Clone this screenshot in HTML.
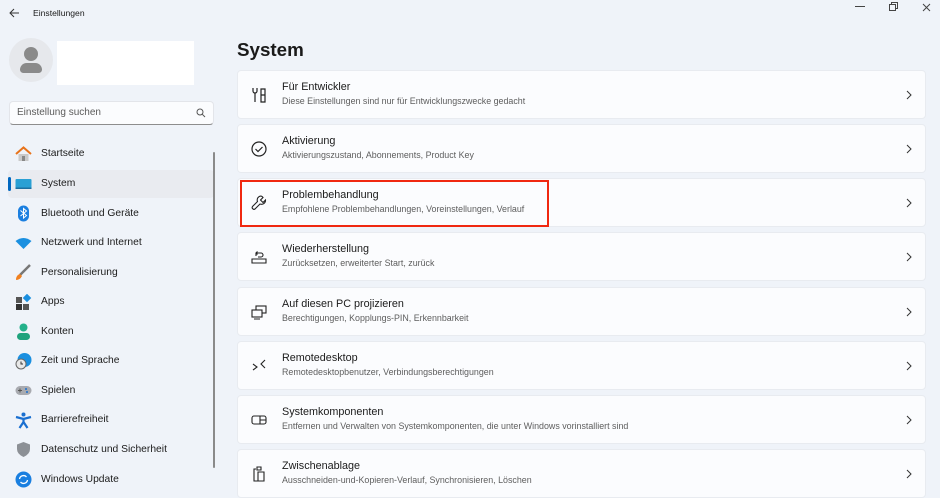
<!DOCTYPE html>
<html><head><meta charset="utf-8"><style>
*{margin:0;padding:0;box-sizing:border-box}
body{width:940px;height:492px;overflow:hidden;background:#eff3f9;font-family:"Liberation Sans",sans-serif;color:#1a1a1a;position:relative}
.abs{position:absolute}
.card{position:absolute;left:237px;width:689px;height:49px;background:#fbfcfe;border-radius:4px;border:1px solid #e8ebf0}
.card .t{position:absolute;left:44px;top:10px;font-size:10.8px;color:#1b1b1b}
.card .s{position:absolute;left:44px;top:25px;font-size:8.9px;color:#5e5e5e}
.card .ic{position:absolute;left:12px;top:15px;width:18px;height:18px}
.card .ch{position:absolute;left:667px;top:19px}
.nav{position:absolute;left:41px;font-size:10.3px;color:#1b1b1b}
.ni{position:absolute;left:15px;width:17px;height:17px}
</style></head><body>
<svg class="abs" style="left:8px;top:7px" width="12" height="12" viewBox="0 0 12 12"><path d="M11 6H2M6 2L2 6l4 4" stroke="#333" stroke-width="1" fill="none"/></svg>
<div class="abs" style="left:33px;top:8px;font-size:8.6px">Einstellungen</div>
<div class="abs" style="left:855px;top:6px;width:10px;border-top:1px solid #444"></div>
<svg class="abs" style="left:889px;top:2px" width="9" height="9"><rect x="0.5" y="2.5" width="6" height="6" stroke="#444" fill="none"/><path d="M2.5 2.5V0.5h6v6h-2" stroke="#444" fill="none"/></svg>
<svg class="abs" style="left:922px;top:3px" width="9" height="9"><path d="M1 1l7 7M8 1L1 8" stroke="#444"/></svg>

<div class="abs" style="left:9px;top:38px;width:44px;height:44px;border-radius:50%;background:#e6e8ec"></div>
<div class="abs" style="left:24px;top:47px;width:14px;height:14px;border-radius:50%;background:#8a8a8a"></div>
<div class="abs" style="left:20px;top:63px;width:22px;height:10px;border-radius:8px 8px 4px 4px;background:#8a8a8a"></div>
<div class="abs" style="left:57px;top:41px;width:137px;height:44px;background:#fff"></div>

<div class="abs" style="left:9px;top:101px;width:205px;height:24px;background:#fbfcfe;border:1px solid #e3e5ea;border-bottom:1px solid #8d8d8d;border-radius:4px"></div>
<div class="abs" style="left:17px;top:107px;font-size:10px;color:#5b5b5b">Einstellung suchen</div>
<svg class="abs" style="left:196px;top:108px" width="10" height="10"><circle cx="4" cy="4" r="3" stroke="#555" fill="none"/><path d="M6.2 6.2L9 9" stroke="#555"/></svg>

<div class="abs" style="left:8px;top:170px;width:206px;height:28px;background:#e9ebf0;border-radius:4px"></div>
<div class="abs" style="left:8px;top:177px;width:3px;height:14px;background:#0067c0;border-radius:2px"></div>
<div class="abs" style="left:213px;top:152px;width:2px;height:316px;background:#8a8a8a;border-radius:1px"></div>

<svg class="ni" style="top:146px" viewBox="0 0 17 17"><path d="M1 8L8.5 1.5 16 8" stroke="#e8731b" stroke-width="2" fill="none"/><rect x="3.5" y="8" width="10" height="7" fill="#c9c9c9"/><rect x="7" y="10" width="3" height="5" fill="#888"/></svg>
<div class="nav" style="top:148px">Startseite</div>
<svg class="ni" style="top:176px" viewBox="0 0 17 17"><rect x="0.5" y="3" width="16" height="10" rx="1" fill="#2aa0d4"/><rect x="0.5" y="11.5" width="16" height="1.5" fill="#1c6fa0"/></svg>
<div class="nav" style="top:178px">System</div>
<svg class="ni" style="top:205px" viewBox="0 0 17 17"><rect x="3" y="0.5" width="11" height="16" rx="5.5" fill="#1b7fe0"/><path d="M5.5 5.5l6 5-3 2.5V3.5l3 2.5-6 5" stroke="#fff" stroke-width="1" fill="none"/></svg>
<div class="nav" style="top:208px">Bluetooth und Geräte</div>
<svg class="ni" style="top:235px" viewBox="0 0 17 17"><path d="M0.5 6Q8.5 0 16.5 6L8.5 14Z" fill="#1a8fe0"/></svg>
<div class="nav" style="top:237px">Netzwerk und Internet</div>
<svg class="ni" style="top:264px" viewBox="0 0 17 17"><path d="M15 1L5 11" stroke="#777" stroke-width="2.5"/><path d="M5 10Q1 11 1 16 5 16 7 12Z" fill="#f08020"/></svg>
<div class="nav" style="top:267px">Personalisierung</div>
<svg class="ni" style="top:294px" viewBox="0 0 17 17"><rect x="1" y="3" width="6" height="6" fill="#555"/><rect x="1" y="10" width="6" height="6" fill="#333"/><rect x="8" y="10" width="6" height="6" fill="#555"/><rect x="9" y="1" width="6" height="6" fill="#1a8fe0" transform="rotate(45 12 4)"/></svg>
<div class="nav" style="top:296px">Apps</div>
<svg class="ni" style="top:323px" viewBox="0 0 17 17"><circle cx="8.5" cy="4.5" r="4" fill="#23b08a"/><rect x="2" y="10" width="13" height="7" rx="3.5" fill="#1fa37d"/></svg>
<div class="nav" style="top:326px">Konten</div>
<svg class="ni" style="top:353px" viewBox="0 0 17 17"><circle cx="9.5" cy="7" r="7" fill="#1a8fe0"/><circle cx="6" cy="11" r="5" fill="#e8e8e8" stroke="#666"/><path d="M6 8.5V11h2" stroke="#333" fill="none"/></svg>
<div class="nav" style="top:355px">Zeit und Sprache</div>
<svg class="ni" style="top:382px" viewBox="0 0 17 17"><rect x="0.5" y="4" width="16" height="9" rx="4.5" fill="#a8aab0"/><circle cx="11" cy="7" r="1" fill="#1a6fd0"/><circle cx="12" cy="10" r="1" fill="#1a6fd0"/><path d="M3 8.5h4M5 6.5v4" stroke="#555"/></svg>
<div class="nav" style="top:385px">Spielen</div>
<svg class="ni" style="top:412px" viewBox="0 0 17 17"><circle cx="8.5" cy="2.5" r="2" fill="#1a6fd0"/><path d="M1 5l7.5 2 7.5-2M8.5 7v3l-4 6M8.5 10l4 6" stroke="#1a6fd0" stroke-width="2.2" fill="none"/></svg>
<div class="nav" style="top:414px">Barrierefreiheit</div>
<svg class="ni" style="top:441px" viewBox="0 0 17 17"><path d="M8.5 1L15 3.5V8Q15 13 8.5 16 2 13 2 8V3.5Z" fill="#8c9096"/></svg>
<div class="nav" style="top:444px">Datenschutz und Sicherheit</div>
<svg class="ni" style="top:471px" viewBox="0 0 17 17"><circle cx="8.5" cy="8.5" r="8" fill="#1a7fe0"/><path d="M4.5 8a4 4 0 0 1 7-2M12.5 9a4 4 0 0 1-7 2" stroke="#fff" stroke-width="1.3" fill="none"/></svg>
<div class="nav" style="top:474px">Windows Update</div>

<div class="abs" style="left:237px;top:39px;font-size:18.8px;font-weight:bold;color:#1a1a1a">System</div>

<div class="card" style="top:70px"><svg class="ic" viewBox="0 0 18 18"><path d="M3 2v3a2 2 0 0 0 4 0V2M5 7v9M11 3h4v13h-4zM11 9h4" stroke="#222" stroke-width="1.2" fill="none"/></svg><div class="t">Für Entwickler</div><div class="s">Diese Einstellungen sind nur für Entwicklungszwecke gedacht</div><svg class="ch" width="8" height="10"><path d="M2 1l4 4-4 4" stroke="#333" fill="none"/></svg></div>
<div class="card" style="top:124px"><svg class="ic" viewBox="0 0 18 18"><circle cx="9" cy="9" r="7" stroke="#222" stroke-width="1.2" fill="none"/><path d="M5.5 9l2.5 2.5 4.5-4.5" stroke="#222" stroke-width="1.2" fill="none"/></svg><div class="t">Aktivierung</div><div class="s">Aktivierungszustand, Abonnements, Product Key</div><svg class="ch" width="8" height="10"><path d="M2 1l4 4-4 4" stroke="#333" fill="none"/></svg></div>
<div class="card" style="top:178px"><svg class="ic" viewBox="0 0 18 18"><path d="M11 2a4 4 0 0 0-3.5 5.5L2.5 12.5a1.8 1.8 0 0 0 2.5 2.5l5-5A4 4 0 0 0 15.5 6l-2.5 2.5-2.5-2.5L13 3.5A4 4 0 0 0 11 2z" stroke="#222" stroke-width="1.1" fill="none"/></svg><div class="t">Problembehandlung</div><div class="s">Empfohlene Problembehandlungen, Voreinstellungen, Verlauf</div><svg class="ch" width="8" height="10"><path d="M2 1l4 4-4 4" stroke="#333" fill="none"/></svg></div>
<div class="abs" style="left:240px;top:180px;width:309px;height:47px;border:2px solid #f02810"></div>
<div class="card" style="top:232px"><svg class="ic" viewBox="0 0 18 18"><path d="M2 11h14v4H2zM6 8V5h5a2 2 0 0 1 0 4H8M7.5 3.5L6 5l1.5 1.5" stroke="#222" stroke-width="1.1" fill="none"/></svg><div class="t">Wiederherstellung</div><div class="s">Zurücksetzen, erweiterter Start, zurück</div><svg class="ch" width="8" height="10"><path d="M2 1l4 4-4 4" stroke="#333" fill="none"/></svg></div>
<div class="card" style="top:287px"><svg class="ic" viewBox="0 0 18 18"><rect x="6" y="3" width="10" height="7" stroke="#222" stroke-width="1.1" fill="none"/><rect x="2" y="7" width="10" height="7" stroke="#222" stroke-width="1.1" fill="#fbfcfe"/><path d="M4 16h6" stroke="#222"/></svg><div class="t">Auf diesen PC projizieren</div><div class="s">Berechtigungen, Kopplungs-PIN, Erkennbarkeit</div><svg class="ch" width="8" height="10"><path d="M2 1l4 4-4 4" stroke="#333" fill="none"/></svg></div>
<div class="card" style="top:341px"><svg class="ic" viewBox="0 0 18 18"><path d="M3 7l4 3-4 3M15 3l-4 4 4 4" stroke="#222" stroke-width="1.1" fill="none"/></svg><div class="t">Remotedesktop</div><div class="s">Remotedesktopbenutzer, Verbindungsberechtigungen</div><svg class="ch" width="8" height="10"><path d="M2 1l4 4-4 4" stroke="#333" fill="none"/></svg></div>
<div class="card" style="top:395px"><svg class="ic" viewBox="0 0 18 18"><rect x="2" y="5" width="14" height="8" rx="2" stroke="#222" stroke-width="1.1" fill="none"/><path d="M10 5v8M10 9h6" stroke="#222" stroke-width="1.1"/></svg><div class="t">Systemkomponenten</div><div class="s">Entfernen und Verwalten von Systemkomponenten, die unter Windows vorinstalliert sind</div><svg class="ch" width="8" height="10"><path d="M2 1l4 4-4 4" stroke="#333" fill="none"/></svg></div>
<div class="card" style="top:449px"><svg class="ic" viewBox="0 0 18 18"><path d="M6 4H4v12h4M7 2h4v3H7zM8 7h6v9H8z" stroke="#222" stroke-width="1.1" fill="none"/></svg><div class="t">Zwischenablage</div><div class="s">Ausschneiden-und-Kopieren-Verlauf, Synchronisieren, Löschen</div><svg class="ch" width="8" height="10"><path d="M2 1l4 4-4 4" stroke="#333" fill="none"/></svg></div>
</body></html>
